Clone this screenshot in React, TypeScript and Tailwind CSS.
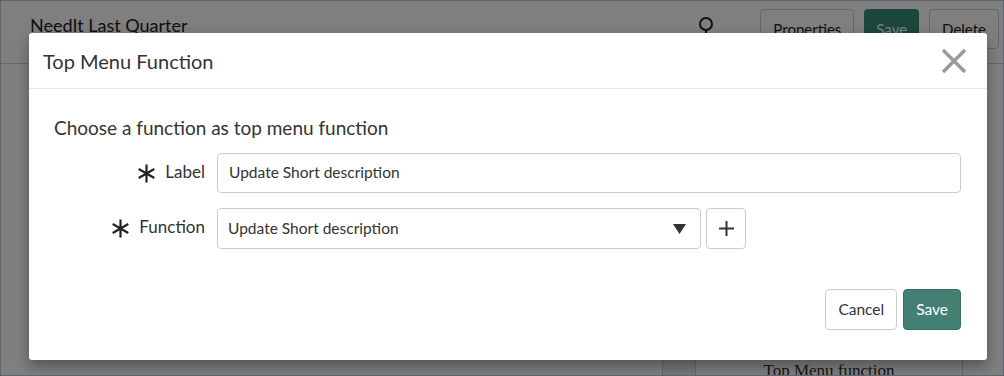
import React from 'react';

const font = { fontFamily: 'Lato, "Open Sans", sans-serif' };

const Asterisk: React.FC = () => (
  <svg width="19" height="19" viewBox="0 0 19 19">
    <path d="M9.5 0.5 L9.5 18.5 M1.7 5 L17.3 14 M17.3 5 L1.7 14" stroke="#222" strokeWidth="2.2" />
  </svg>
);

const App: React.FC = () => {
  return (
    <div
      className="relative w-[1004px] h-[376px] overflow-hidden bg-white border border-[#5b6670] font-['Lato',sans-serif] text-[#2e2e2e]"
    >
      {/* page behind the modal */}
      <div className="flex items-center justify-between h-[63px] pl-[29px] pr-[4px] border-b border-[#d5d5d5]">
        <h1 className="text-[18px] text-[#222] -mt-[14px]">NeedIt Last Quarter</h1>
        <div className="flex items-center gap-[10px] -mt-[6px]">
          <svg width="16" height="22" viewBox="0 0 16 22" className="mr-[36px] -mt-[4px]">
            <circle cx="8" cy="8" r="6" fill="none" stroke="#222" strokeWidth="2" />
            <path d="M8 14 L8 20" stroke="#222" strokeWidth="2" />
          </svg>
          <button className="h-[40px] px-[12px] rounded-[4px] border border-[#ccc] bg-white text-[15px] text-[#222]">Properties</button>
          <button className="h-[40px] px-[12px] rounded-[4px] bg-[#378f7b] text-[15px] text-white">Save</button>
          <button className="h-[40px] px-[12px] rounded-[4px] border border-[#ccc] bg-white text-[15px] text-[#222]">Delete</button>
        </div>
      </div>
      <div className="flex justify-end pr-[40px] pt-[290px]">
        <div className="flex h-[40px] border-l border-r border-[#ccc]">
          <div className="w-[33px] border-r border-[#ccc] bg-[#eee]" />
          <div className="w-[266px] text-center text-[17px] font-['Liberation_Serif',serif] pt-[4px]">Top Menu function</div>
        </div>
      </div>

      {/* overlay */}
      <div className="absolute inset-0 bg-black/50" />

      {/* modal */}
      <div
        className="absolute left-[28px] top-[32px] w-[958px] h-[327px] bg-white rounded-[3px] shadow-[0_6px_14px_rgba(0,0,0,0.35)] flex flex-col"
        style={font}
      >
        <div className="flex items-center justify-between h-[56px] pl-[14px] pr-[20px] border-b border-[#e5e5e5]">
          <h2 className="text-[20px] text-[#333]">Top Menu Function</h2>
          <svg width="26" height="26" viewBox="0 0 26 26">
            <path d="M2 2 L24 24 M24 2 L2 24" stroke="#9a9a9a" strokeWidth="3.5" />
          </svg>
        </div>
        <div className="flex flex-col pl-[25px] pr-[26px] pt-[26px]">
          <p className="text-[19px] text-[#333] leading-[26px]">Choose a function as top menu function</p>
          <div className="flex items-center mt-[12px]">
            <div className="w-[163px] flex items-center justify-end gap-[9px] pr-[12px]">
              <Asterisk />
              <span className="text-[17px] text-[#333] -mt-[3px]">Label</span>
            </div>
            <div className="flex-1 h-[40px] border border-[#ccc] rounded-[4px] flex items-center px-[11px] text-[15.5px] text-[#333]">
              Update Short description
            </div>
          </div>
          <div className="flex items-center mt-[15px]">
            <div className="w-[163px] flex items-center justify-end gap-[9px] pr-[12px]">
              <Asterisk />
              <span className="text-[17px] text-[#333] -mt-[4px]">Function</span>
            </div>
            <div className="w-[484px] h-[41px] border border-[#ccc] rounded-[4px] flex items-center justify-between pl-[10px] pr-[14px] text-[15.5px] text-[#333]">
              <span>Update Short description</span>
              <svg width="13" height="10" viewBox="0 0 13 10">
                <path d="M0 0 L13 0 L6.5 10 Z" fill="#333" />
              </svg>
            </div>
            <div className="ml-[5px] w-[40px] h-[41px] border border-[#ccc] rounded-[4px] flex items-center justify-center">
              <svg width="17" height="17" viewBox="0 0 17 17">
                <path d="M8.5 1 L8.5 16 M1 8.5 L16 8.5" stroke="#333" strokeWidth="2" />
              </svg>
            </div>
          </div>
        </div>
        <div className="flex justify-end gap-[6px] pr-[26px] mt-auto mb-[30px]">
          <button className="h-[41px] px-[12px] rounded-[4px] border border-[#ccc] bg-white text-[15.5px] text-[#333]">Cancel</button>
          <button className="h-[41px] px-[12px] rounded-[4px] border border-[#3a6e63] bg-[#447f73] text-[15.5px] text-white">Save</button>
        </div>
      </div>
    </div>
  );
};

export default App;
